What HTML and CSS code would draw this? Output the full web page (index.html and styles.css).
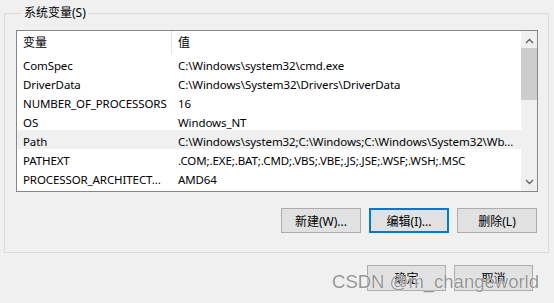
FILE: index.html
```html
<!DOCTYPE html>
<html lang="zh-CN">
<head>
    <meta charset="UTF-8">
    <meta name="viewport" content="width=device-width, initial-scale=1.0">
    <title>系统变量</title>
    <link rel="stylesheet" href="styles.css">
</head>
<body>
    <div class="dialog">
        <fieldset class="group">
            <legend>系统变量(S)</legend>
            <div class="listbox">
                <div class="rows">
                    <div class="row head">
                        <div class="cell name">变量</div>
                        <div class="cell value">值</div>
                    </div>
                    <div class="row">
                        <div class="cell name">ComSpec</div>
                        <div class="cell value">C:\Windows\system32\cmd.exe</div>
                    </div>
                    <div class="row">
                        <div class="cell name">DriverData</div>
                        <div class="cell value">C:\Windows\System32\Drivers\DriverData</div>
                    </div>
                    <div class="row">
                        <div class="cell name">NUMBER_OF_PROCESSORS</div>
                        <div class="cell value">16</div>
                    </div>
                    <div class="row">
                        <div class="cell name">OS</div>
                        <div class="cell value">Windows_NT</div>
                    </div>
                    <div class="row selected">
                        <div class="cell name">Path</div>
                        <div class="cell value">C:\Windows\system32;C:\Windows;C:\Windows\System32\Wb...</div>
                    </div>
                    <div class="row">
                        <div class="cell name">PATHEXT</div>
                        <div class="cell value">.COM;.EXE;.BAT;.CMD;.VBS;.VBE;.JS;.JSE;.WSF;.WSH;.MSC</div>
                    </div>
                    <div class="row">
                        <div class="cell name">PROCESSOR_ARCHITECT...</div>
                        <div class="cell value">AMD64</div>
                    </div>
                </div>
                <div class="scrollbar">
                    <div class="arrow">
                        <svg width="9" height="6" viewBox="0 0 9 6"><path d="M1 5 L4.5 1.5 L8 5" fill="none" stroke="#606060" stroke-width="1.3"/></svg>
                    </div>
                    <div class="track">
                        <div class="thumb"></div>
                    </div>
                    <div class="arrow">
                        <svg width="9" height="6" viewBox="0 0 9 6"><path d="M1 1 L4.5 4.5 L8 1" fill="none" stroke="#606060" stroke-width="1.3"/></svg>
                    </div>
                </div>
            </div>
            <div class="actions">
                <button class="winbtn">新建(W)...</button>
                <button class="winbtn focus">编辑(I)...</button>
                <button class="winbtn">删除(L)</button>
            </div>
        </fieldset>
        <div class="footer">
            <button class="winbtn">确定</button>
            <button class="winbtn">取消</button>
        </div>
        <span class="watermark">CSDN @m_changeworld</span>
    </div>
</body>
</html>
```
FILE: styles.css
```css
*{
    margin: 0;
    padding: 0;
    box-sizing: border-box;
}
body{
    background: #f0f0f0;
    font-family: "Noto Sans", "Noto Sans CJK SC", sans-serif;
    font-size: 11.5px;
    letter-spacing: -0.1px;
    color: #000;
    width: 554px;
    height: 303px;
    overflow: hidden;
}
.dialog{
    position: relative;
    height: 303px;
    padding: 5px 5px 0 4px;
}
.group{
    border: 1px solid #dcdcdc;
    padding: 9px 10px 19px 11px;
    min-width: 0;
}
.group legend{
    margin-left: 6px;
    padding: 0 2px;
    line-height: 16px;
    font-size: 12px;
    letter-spacing: 0;
}
.listbox{
    display: flex;
    height: 162px;
    border: 1px solid #828790;
    background: #fff;
}
.rows{
    flex: 1;
    min-width: 0;
}
.row{
    display: grid;
    grid-template-columns: 155px 1fr;
    height: 19px;
}
.row.head{
    height: 23px;
}
.row.head .cell{
    padding-top: 3px;
    font-size: 12px;
}
.row.head .name{
    border-right: 1px solid #e5e5e5;
}
.row.selected{
    background: #f0f0f0;
}
.cell{
    padding: 3px 0 0 6px;
    line-height: 17px;
    white-space: nowrap;
    overflow: hidden;
}
.scrollbar{
    width: 16px;
    background: #f0f0f0;
    display: flex;
    flex-direction: column;
}
.arrow{
    height: 17px;
    display: flex;
    justify-content: center;
    align-items: center;
    padding-top: 2px;
}
.arrow + .track + .arrow{
    padding: 0 0 2px;
}
.track{
    flex: 1;
}
.thumb{
    height: 52px;
    background: #cdcdcd;
}
.actions{
    display: flex;
    justify-content: flex-end;
    gap: 8px;
    margin-top: 16px;
    padding-right: 1px;
}
.winbtn{
    width: 80px;
    height: 25px;
    background: #e1e1e1;
    border: 1px solid #adadad;
    font-family: inherit;
    font-size: 12px;
    letter-spacing: 0;
    color: #000;
}
.winbtn.focus{
    border: 2px solid #0078d7;
}
.footer{
    display: flex;
    justify-content: flex-end;
    gap: 8px;
    margin-top: 12px;
    padding-right: 16px;
}
.footer .winbtn{
    width: 79px;
    height: 26px;
}
.watermark{
    position: absolute;
    right: 15px;
    bottom: 10px;
    font-family: "Liberation Sans", sans-serif;
    font-size: 18.5px;
    line-height: 22px;
    letter-spacing: 0;
    color: rgba(120, 120, 120, 0.8);
    text-shadow: 0 0 1px #fff, 0 0 1px #fff;
    white-space: nowrap;
}
```
